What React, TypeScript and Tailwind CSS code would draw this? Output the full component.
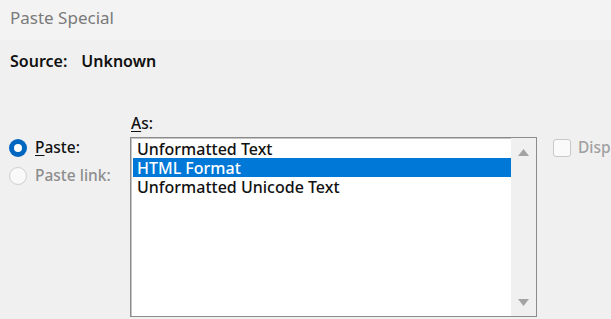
export default function App() {
  const items = ["Unformatted Text", "HTML Format", "Unformatted Unicode Text"];
  return (
    <div className="flex h-[319px] w-[611px] flex-col overflow-hidden bg-[#f0f0f0] text-[15.5px] text-[#111] [font-family:'Noto_Sans',sans-serif]">
      <div className="flex h-[40px] shrink-0 items-center bg-[#f3f3f3] pb-[4px] pl-[10px] text-[17px] text-[#7a7a7a]">
        Paste Special
      </div>
      <div className="mt-[11px] flex h-[20px] items-center whitespace-nowrap pl-[10px] text-[16px] font-semibold leading-none">
        <span>Source:</span>
        <span className="ml-[14px]">Unknown</span>
      </div>
      <div className="mt-[40px] flex items-start">
        <div className="flex w-[130px] shrink-0 flex-col gap-[8px] pl-[9px] pt-[27px] font-medium">
          <label className="flex h-[20px] items-center gap-[8px]">
            <span className="flex h-[18px] w-[18px] items-center justify-center rounded-full bg-[#0067c0]">
              <span className="h-[8px] w-[8px] rounded-full bg-white" />
            </span>
            <span>
              <span className="underline underline-offset-2">P</span>aste:
            </span>
          </label>
          <label className="flex h-[20px] items-center gap-[8px] text-[#8d8d8d]">
            <span className="h-[18px] w-[18px] rounded-full border border-[#cfcfcf] bg-[#f9f9f9]" />
            <span>Paste link:</span>
          </label>
        </div>
        <div className="flex w-[407px] shrink-0 flex-col">
          <div className="flex h-[26px] items-center pl-[1px] font-medium">
            <span>
              <span className="underline underline-offset-2">A</span>s:
            </span>
          </div>
          <div className="flex h-[180px] border border-[#8c8c8c] bg-white shadow-[inset_1px_1px_0_#c4c4c4]">
            <div className="flex-1 pl-[2px] pt-[1px]">
              {items.map((t, i) => (
                <div
                  key={t}
                  className={`flex h-[19px] items-center whitespace-nowrap pl-[4px] text-[16px] font-medium leading-none ${
                    i === 1 ? "bg-[#0078d7] text-white" : ""
                  }`}
                >
                  {t}
                </div>
              ))}
            </div>
            <div className="flex w-[25px] flex-col items-center justify-between bg-[#f0f0f0] pb-[10px] pt-[11px]">
              <svg width="11" height="7" viewBox="0 0 11 7">
                <path d="M5.5 0 L11 7 L0 7 Z" fill="#a3a3a3" />
              </svg>
              <svg width="11" height="7" viewBox="0 0 11 7">
                <path d="M0 0 L11 0 L5.5 7 Z" fill="#a3a3a3" />
              </svg>
            </div>
          </div>
        </div>
        <label className="ml-[16px] mt-[27px] flex h-[20px] items-center gap-[7px] whitespace-nowrap font-medium text-[#a0a0a0]">
          <span className="h-[18px] w-[18px] shrink-0 rounded-[3px] border border-[#c8c8c8] bg-[#fafafa]" />
          <span>Display as icon</span>
        </label>
      </div>
    </div>
  );
}
